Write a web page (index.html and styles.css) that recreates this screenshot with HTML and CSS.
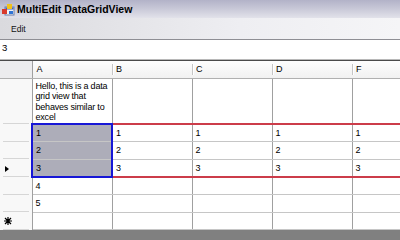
FILE: index.html
```html
<!DOCTYPE html>
<html lang="en">
<head>
    <meta charset="UTF-8">
    <title>MultiEdit DataGridView</title>
    <link rel="stylesheet" href="styles.css">
</head>
<body>
    <div class="window">
        <!-- Title bar -->
        <div class="titlebar">
            <svg class="app-icon" width="13" height="13" viewBox="0 0 13 13">
                <rect x="3" y="4" width="9" height="8" fill="#f4f4f4" stroke="#6d7fa8"/>
                <rect x="3.5" y="4.5" width="8" height="2" fill="#3a5fc8"/>
                <rect x="0" y="6" width="5" height="5" fill="#d83a2c"/>
                <rect x="5" y="1" width="5" height="5" fill="#f2c21a"/>
                <rect x="7" y="8" width="4" height="3" fill="#2f74d6"/>
            </svg>
            <span class="title">MultiEdit DataGridView</span>
        </div>

        <!-- Menu -->
        <div class="menubar">
            <span class="menu-item">Edit</span>
        </div>

        <div class="textbox">3</div>

        <!-- Grid -->
        <div class="grid-wrap">
            <table class="grid">
                <colgroup>
                    <col class="col-rowhead">
                    <col class="col-data">
                    <col class="col-data">
                    <col class="col-data">
                    <col class="col-data">
                    <col class="col-data">
                </colgroup>
                <tr class="head-row">
                    <td class="corner"></td>
                    <td class="colhead first">A</td>
                    <td class="colhead">B</td>
                    <td class="colhead">C</td>
                    <td class="colhead">D</td>
                    <td class="colhead">F</td>
                </tr>
                <tr class="tall-row">
                    <td class="rowhead"></td>
                    <td class="wrap">Hello, this is a data grid view that behaves similar to excel</td>
                    <td></td>
                    <td></td>
                    <td></td>
                    <td></td>
                </tr>
                <tr class="edge-row">
                    <td class="rowhead"></td>
                    <td class="sel sel-top">1</td>
                    <td class="red-top">1</td>
                    <td class="red-top">1</td>
                    <td class="red-top">1</td>
                    <td class="red-top">1</td>
                </tr>
                <tr>
                    <td class="rowhead"></td>
                    <td class="sel">2</td>
                    <td>2</td>
                    <td>2</td>
                    <td>2</td>
                    <td>2</td>
                </tr>
                <tr class="edge-row">
                    <td class="rowhead"><span class="current-mark"></span></td>
                    <td class="sel sel-bottom">3</td>
                    <td class="red-bottom">3</td>
                    <td class="red-bottom">3</td>
                    <td class="red-bottom">3</td>
                    <td class="red-bottom">3</td>
                </tr>
                <tr>
                    <td class="rowhead"></td>
                    <td>4</td>
                    <td></td>
                    <td></td>
                    <td></td>
                    <td></td>
                </tr>
                <tr>
                    <td class="rowhead"></td>
                    <td>5</td>
                    <td></td>
                    <td></td>
                    <td></td>
                    <td></td>
                </tr>
                <tr>
                    <td class="rowhead">
                        <svg class="new-mark" width="8" height="8" viewBox="0 0 8 8">
                            <path d="M4 0V8M0 4H8M1 1L7 7M7 1L1 7" stroke="#000" stroke-width="1.2"/>
                        </svg>
                    </td>
                    <td></td>
                    <td></td>
                    <td></td>
                    <td></td>
                    <td></td>
                </tr>
            </table>
        </div>
    </div>
</body>
</html>
```

FILE: styles.css
```css
body {
    margin: 0;
    font-family: "Liberation Sans", Arial, sans-serif;
    overflow: hidden;
}
.window {
    width: 400px;
    height: 240px;
    display: flex;
    flex-direction: column;
    overflow: hidden;
}
.titlebar {
    height: 18px;
    flex: none;
    display: flex;
    align-items: center;
    padding-left: 2px;
    background: linear-gradient(180deg, #b2b2c8 0%, #c9c9d8 50%, #e2e2ea 100%);
}
.app-icon {
    margin-right: 2px;
}
.title {
    font-weight: bold;
    font-size: 10.5px;
    color: #000;
}
.menubar {
    height: 21px;
    flex: none;
    display: flex;
    align-items: center;
    padding-left: 11px;
    border-bottom: 1px solid #8e8e94;
    background: linear-gradient(90deg, #dadade, #eeeef2 60%, #f5f5f7);
}
.menu-item {
    font-size: 8.5px;
    color: #111;
    padding-top: 1px;
}
.textbox {
    height: 20px;
    flex: none;
    box-sizing: border-box;
    padding: 1px 0 0 2px;
    font-size: 9.5px;
    line-height: 13px;
    background: #fff;
    border-bottom: 1px solid #b8b8b8;
}
.grid-wrap {
    flex: 1;
    background: #808080;
    border-top: 1px solid #4a4a4a;
    overflow: hidden;
}
.grid {
    border-collapse: collapse;
    table-layout: fixed;
    width: 432px;
    background: #fff;
    font-size: 9px;
    letter-spacing: -0.2px;
}
.col-rowhead {
    width: 32px;
}
.col-data {
    width: 80px;
}
.grid td {
    box-sizing: border-box;
    height: 17.5px;
    padding: 0 0 0 3px;
    border-right: 1px solid #a0a0a0;
    border-bottom: 1px solid #c6c6c6;
    vertical-align: middle;
    white-space: nowrap;
    overflow: hidden;
    color: #000;
}
.grid .head-row td {
    height: 17px;
}
.grid .edge-row td {
    height: 18px;
}
.grid .corner {
    background: #ececee;
    border-bottom: 1px solid #b0b0b0;
}
.grid .colhead {
    border-right: none;
    border-bottom: 1px solid #b0b0b0;
    padding-left: 4px;
    background:
        linear-gradient(90deg, #c6c6c6 1px, #fff 1px, #fff 2px, transparent 2px) no-repeat 0 3px / 2px 11px,
        linear-gradient(180deg, #fdfdfd, #f1f1f1);
}
.grid .colhead.first {
    background: linear-gradient(180deg, #fdfdfd, #f1f1f1);
}
.grid .rowhead {
    padding: 0 0 0 4px;
    border-bottom: none;
    background:
        linear-gradient(#d6d6d6, #d6d6d6) no-repeat 3px 100% / 26px 1px,
        #f8f8f8;
}
.grid .tall-row td {
    height: 45px;
}
.grid .wrap {
    white-space: normal;
    vertical-align: top;
    line-height: 10.5px;
    padding-top: 2px;
}
.grid .sel {
    background: #adadb9;
    border-left: 2px solid #1717d6;
    border-right: 2px solid #1717d6;
}
.grid .sel-top {
    border-top: 2px solid #1717d6;
}
.grid .sel-bottom {
    border-bottom: 2px solid #1717d6;
}
.grid .red-top {
    border-top: 2px solid #cc3c4a;
}
.grid .red-bottom {
    border-bottom: 2px solid #cc3c4a;
}
.current-mark {
    display: inline-block;
    width: 0;
    height: 0;
    border-top: 3px solid transparent;
    border-bottom: 3px solid transparent;
    border-left: 4px solid #000;
    vertical-align: middle;
    margin-left: 1px;
}
.new-mark {
    display: block;
}
```
